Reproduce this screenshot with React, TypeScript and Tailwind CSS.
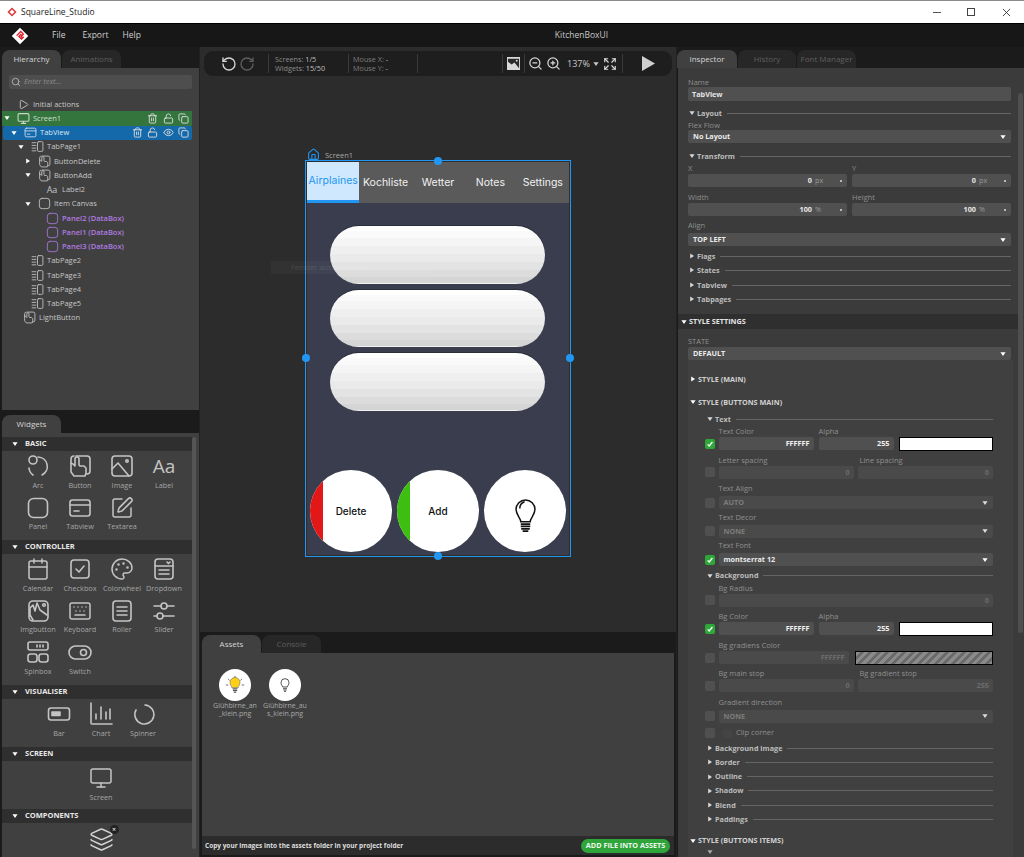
import { Calendar, Copy, Expand, Eye, House, Keyboard, Layers, LockOpen, Monitor, Palette, Play, RotateCcw, RotateCw, Search, SquarePen, Trash2, ZoomIn, ZoomOut } from 'lucide-react';
import type { ReactNode } from 'react';

const ui = { fontFamily: '"Open Sans", "Noto Sans", sans-serif' };

function Tri({ open, className = 'text-white' }: { open?: boolean; className?: string }) {
  return (
    <svg viewBox="0 0 6 6" className={`w-[6px] h-[6px] shrink-0 fill-current ${className}`}>
      {open ? <path d="M0.4 1.2H5.6L3 5Z" /> : <path d="M1.2 0.4V5.6L5 3Z" />}
    </svg>
  );
}

/* ---------- drawn icons ---------- */
function Svg({ size = 14, children, className = 'text-[#c4c4c4]' }: { size?: number; children: ReactNode; className?: string }) {
  return (
    <svg viewBox="0 0 24 24" width={size} height={size} fill="none" stroke="currentColor" strokeWidth={1.6} strokeLinecap="round" strokeLinejoin="round" className={`shrink-0 ${className}`}>
      {children}
    </svg>
  );
}
const ButtonGlyph = () => (
  <>
    <path d="M8 2h11a3 3 0 0 1 3 3v12a3 3 0 0 1-3 3h-1" />
    <path d="M3 9V5a3 3 0 0 1 3-3" />
    <path d="M3 9v9l3 4h11l1-3v-5l-2-2h-4l-1-1V5a2 2 0 0 0-4 0v7l-2-2a1.5 1.5 0 0 0-2 0" />
  </>
);
const TabviewGlyph = () => (
  <>
    <rect x="2" y="4" width="20" height="16" rx="2.5" />
    <path d="M2 9h20M6 15h5" />
  </>
);
const PanelGlyph = () => <rect x="2.5" y="2.5" width="19" height="19" rx="5" />;
const TabPageGlyph = () => (
  <>
    <path d="M2 5h7M2 10h7M2 15h7M2 20h7" />
    <rect x="12" y="3" width="10" height="18" rx="2" />
  </>
);
const ArcGlyph = () => (
  <>
    <circle cx="7" cy="6" r="4" />
    <path d="M12 3a9.5 9.5 0 0 1 4 18M7 21a9.5 9.5 0 0 1-4-7" />
  </>
);
const ImageGlyph = () => (
  <>
    <rect x="2" y="2" width="20" height="20" rx="3" />
    <circle cx="17" cy="7" r="1.2" />
    <path d="M2 15l6-6 11 13" />
  </>
);
const CheckGlyph = () => (
  <>
    <rect x="3" y="3" width="18" height="18" rx="3" />
    <path d="M8 12l3 3 5-6" />
  </>
);
const DropdownGlyph = () => (
  <>
    <rect x="3" y="2" width="18" height="20" rx="3" />
    <path d="M3 9h18M7 13h10M7 17h10M15 5l1.5 1.5L18 5" />
  </>
);
const ImgButtonGlyph = () => (
  <>
    <rect x="3" y="2" width="19" height="20" rx="4" />
    <circle cx="18" cy="6" r="1.3" />
    <path d="M7 21l-3-5V9l3-3 2 6 2-8 3 7 7 5" />
  </>
);
const RollerGlyph = () => (
  <>
    <rect x="3" y="2" width="18" height="20" rx="3" />
    <path d="M7 8h10M7 12h10M7 16h10" />
  </>
);
const SliderGlyph = () => (
  <>
    <path d="M2 7h7M15 7h7M2 17h3M11 17h11" />
    <circle cx="12" cy="7" r="3" />
    <circle cx="8" cy="17" r="3" />
  </>
);
const SpinboxGlyph = () => (
  <>
    <rect x="2" y="2" width="20" height="8" rx="2" />
    <rect x="2" y="14" width="9" height="8" rx="2.5" />
    <rect x="13" y="14" width="9" height="8" rx="2.5" />
    <path d="M11 5v2M14 5v2M17 5v2" />
  </>
);
const SwitchGlyph = () => (
  <>
    <rect x="1" y="6" width="22" height="13" rx="6.5" />
    <circle cx="15.5" cy="12.5" r="3" />
  </>
);
const BarGlyph = () => (
  <>
    <rect x="1.5" y="6" width="21" height="12" rx="2.5" />
    <rect x="5" y="10" width="8" height="3.5" fill="currentColor" />
  </>
);
const ChartGlyph = () => <path d="M2 1v20a1 1 0 0 0 1 1h20M7 12v5M12 5v12M17 10v7M21 7v10" />;
const SpinnerGlyph = () => <path d="M14 3a9.5 9.5 0 1 1-9 5" />;

function Logo({ size }: { size: number }) {
  return (
    <svg viewBox="0 0 24 24" width={size} height={size} className="shrink-0">
      <path d="M12 1L23 12 12 23 1 12Z" fill="#fff" />
      <path d="M7.5 11.5L13 6l3.5 3.5-2 2-1.5-1.5-2.5 2.5 3.5 3.5 3-3M13 12l2 2" fill="none" stroke="#e01b24" strokeWidth={1.8} />
    </svg>
  );
}

function BulbBig() {
  return (
    <svg viewBox="0 0 24 38" className="w-[23px] h-[36px] mt-[10px]" fill="none" stroke="#111" strokeWidth={1.6}>
      <path d="M7 25c0-4-5-7-5-13a10 10 0 0 1 20 0c0 6-5 9-5 13Z" />
      <path d="M6 11c0-4 2-6 5-7" />
      <path d="M7 27.5h10M7 30h10M7.5 32.5h9M9 35h6" strokeWidth={1.8} />
    </svg>
  );
}

/* ---------- shared pieces ---------- */
function TabBar({ tabs, className = '' }: { tabs: { label: string; w: string }[]; className?: string }) {
  return (
    <div className={`flex h-[18px] shrink-0 ${className}`}>
      {tabs.map((t, i) => (
        <div
          key={t.label}
          className={`${t.w} mr-px flex items-center justify-center rounded-t-lg text-[8px] ${i === 0 ? 'bg-[#404040] text-[#d4d4d4]' : 'bg-[#272727] text-[#5f5f5f]'}`}
        >
          {t.label}
        </div>
      ))}
    </div>
  );
}

const INDENT = ['pl-[2px]', 'pl-[8px]', 'pl-[16px]', 'pl-[23px]', 'pl-[31px]'];

function TreeRow({ level, arrow, icon, label, className = '', labelClass = 'text-[#c6c6c6]', actions }: {
  level: number; arrow?: 'open' | 'closed'; icon: ReactNode; label: string; className?: string; labelClass?: string; actions?: ReactNode;
}) {
  return (
    <div className={`flex items-center h-[14.25px] ${INDENT[level]} ${className}`}>
      <span className="w-[6px] mr-[6px] shrink-0 flex">{arrow && <Tri open={arrow === 'open'} />}</span>
      <span className="w-[14px] flex justify-center shrink-0">{icon}</span>
      <span className={`ml-[3px] text-[7.5px] whitespace-nowrap ${labelClass}`}>{label}</span>
      {actions && <span className="ml-auto flex items-center gap-[4.5px] pr-[3px] text-[#dcdcdc]">{actions}</span>}
    </div>
  );
}

function Hierarchy() {
  const purple = 'font-semibold text-[#b07be0]';
  return (
    <div className="h-[342px] bg-[#404040] pt-[7px] shrink-0">
      <div className="ml-[7px] w-[183px] h-[14px] rounded-[2px] bg-[#4e4e4e] flex items-center px-[2px] gap-[3px]">
        <Search size={10} className="text-[#bbb]" />
        <span className="text-[7.5px] italic text-[#8d8d8d]">Enter text...</span>
      </div>
      <div className="mt-[8px] w-[190px]">
        <TreeRow level={0} icon={<Play size={11} className="text-[#c4c4c4]" />} label="Initial actions" />
        <TreeRow
          level={0} arrow="open" icon={<Monitor size={13} className="text-[#c8d8c8]" />} label="Screen1" className="bg-[#33753c]" labelClass="text-[#d4dfd4]"
          actions={<>
            <Trash2 size={11} /><LockOpen size={11} /><Copy size={11} />
          </>}
        />
        <TreeRow
          level={1} arrow="open" icon={<Svg size={13} className="text-[#cfe0ef]"><TabviewGlyph /></Svg>} label="TabView" className="bg-[#1469ab] rounded-[2px] ml-px" labelClass="text-[#d8e6f2]"
          actions={<>
            <Trash2 size={11} /><LockOpen size={11} /><Eye size={11} /><Copy size={11} />
          </>}
        />
        <TreeRow level={2} arrow="open" icon={<Svg size={13}><TabPageGlyph /></Svg>} label="TabPage1" />
        <TreeRow level={3} arrow="closed" icon={<Svg size={13}><ButtonGlyph /></Svg>} label="ButtonDelete" />
        <TreeRow level={3} arrow="open" icon={<Svg size={13}><ButtonGlyph /></Svg>} label="ButtonAdd" />
        <TreeRow level={4} icon={<span className="text-[9px] text-[#c4c4c4] leading-none">Aa</span>} label="Label2" />
        <TreeRow level={3} arrow="open" icon={<Svg size={13}><PanelGlyph /></Svg>} label="Item Canvas" />
        <TreeRow level={4} icon={<Svg size={13} className="text-[#a878d8]"><PanelGlyph /></Svg>} label="Panel2 (DataBox)" labelClass={purple} />
        <TreeRow level={4} icon={<Svg size={13} className="text-[#a878d8]"><PanelGlyph /></Svg>} label="Panel1 (DataBox)" labelClass={purple} />
        <TreeRow level={4} icon={<Svg size={13} className="text-[#a878d8]"><PanelGlyph /></Svg>} label="Panel3 (DataBox)" labelClass={purple} />
        <TreeRow level={2} icon={<Svg size={13}><TabPageGlyph /></Svg>} label="TabPage2" />
        <TreeRow level={2} icon={<Svg size={13}><TabPageGlyph /></Svg>} label="TabPage3" />
        <TreeRow level={2} icon={<Svg size={13}><TabPageGlyph /></Svg>} label="TabPage4" />
        <TreeRow level={2} icon={<Svg size={13}><TabPageGlyph /></Svg>} label="TabPage5" />
        <TreeRow level={1} icon={<Svg size={13}><ButtonGlyph /></Svg>} label="LightButton" />
      </div>
    </div>
  );
}

function WidgetHead({ label }: { label: string }) {
  return (
    <div className="h-[14px] w-[191px] bg-[#2f2f2f] flex items-center pl-[10px] gap-[7px]">
      <Tri open />
      <span className="text-[7.5px] font-bold text-[#e8e8e8]">{label}</span>
    </div>
  );
}

function Widget({ label, children }: { label: string; children: ReactNode }) {
  return (
    <div className="w-[42px] h-[41.5px] flex flex-col items-center pt-[2.5px]">
      <div className="h-[25px] flex items-center justify-center">{children}</div>
      <span className="mt-px text-[7.25px] leading-[11px] text-[#a6a6a6] whitespace-nowrap">{label}</span>
    </div>
  );
}

function Widgets() {
  const S = 24;
  return (
    <div className="relative flex-1 bg-[#404040] pt-[4px] ml-[2px] overflow-hidden">
      <div className="absolute right-[3px] top-[4px] bottom-[8px] w-[4px] rounded bg-[#555]" />
      <WidgetHead label="BASIC" />
      <div className="grid grid-cols-[repeat(4,42px)] pl-[15px] pb-[6px]">
        <Widget label="Arc"><Svg size={S}><ArcGlyph /></Svg></Widget>
        <Widget label="Button"><Svg size={S}><ButtonGlyph /></Svg></Widget>
        <Widget label="Image"><Svg size={S}><ImageGlyph /></Svg></Widget>
        <Widget label="Label"><span className="text-[19px] leading-none text-[#c4c4c4]">Aa</span></Widget>
        <Widget label="Panel"><Svg size={S}><PanelGlyph /></Svg></Widget>
        <Widget label="Tabview"><Svg size={S}><TabviewGlyph /></Svg></Widget>
        <Widget label="Textarea"><SquarePen size={S} strokeWidth={1.5} className="text-[#c4c4c4]" /></Widget>
      </div>
      <WidgetHead label="CONTROLLER" />
      <div className="grid grid-cols-[repeat(4,42px)] pl-[15px] pb-[6.5px]">
        <Widget label="Calendar"><Calendar size={S} strokeWidth={1.5} className="text-[#c4c4c4]" /></Widget>
        <Widget label="Checkbox"><Svg size={S}><CheckGlyph /></Svg></Widget>
        <Widget label="Colorwheel"><Palette size={S} strokeWidth={1.5} className="text-[#c4c4c4]" /></Widget>
        <Widget label="Dropdown"><Svg size={S}><DropdownGlyph /></Svg></Widget>
        <Widget label="Imgbutton"><Svg size={S}><ImgButtonGlyph /></Svg></Widget>
        <Widget label="Keyboard"><Keyboard size={S} strokeWidth={1.5} className="text-[#c4c4c4]" /></Widget>
        <Widget label="Roller"><Svg size={S}><RollerGlyph /></Svg></Widget>
        <Widget label="Slider"><Svg size={S}><SliderGlyph /></Svg></Widget>
        <Widget label="Spinbox"><Svg size={S}><SpinboxGlyph /></Svg></Widget>
        <Widget label="Switch"><Svg size={S}><SwitchGlyph /></Svg></Widget>
      </div>
      <WidgetHead label="VISUALISER" />
      <div className="flex justify-center pl-[7px] w-[191px] pb-[6.5px]">
        <Widget label="Bar"><Svg size={S}><BarGlyph /></Svg></Widget>
        <Widget label="Chart"><Svg size={S}><ChartGlyph /></Svg></Widget>
        <Widget label="Spinner"><Svg size={S}><SpinnerGlyph /></Svg></Widget>
      </div>
      <WidgetHead label="SCREEN" />
      <div className="flex justify-center pl-[7px] w-[191px] pb-[4.5px] pt-[2px]">
        <Widget label="Screen"><Monitor size={S} strokeWidth={1.5} className="text-[#c4c4c4]" /></Widget>
      </div>
      <WidgetHead label="COMPONENTS" />
      <div className="flex justify-center pl-[7px] w-[191px] pt-[4px]">
        <div className="relative">
          <Layers size={25} strokeWidth={1.4} className="text-[#d4d4d4]" />
          <span className="absolute -top-[2px] -right-[5px] w-[9px] h-[9px] rounded-full bg-[#222] text-white text-[7px] leading-[9px] text-center">×</span>
        </div>
      </div>
    </div>
  );
}

/* ---------- canvas ---------- */
function Sep() {
  return <span className="block w-px h-[19px] bg-[#3a3a3a] shrink-0" />;
}

function Toolbar() {
  return (
    <div className="mx-[4px] mt-[4px] h-[25px] rounded-[9px] bg-[#1e1e1e] flex items-center shrink-0">
      <RotateCcw size={16} className="ml-[17px] text-[#d6d6d6]" />
      <RotateCw size={16} className="ml-[2px] mr-[13px] text-[#5e5e5e]" />
      <Sep />
      <div className="w-[79px] pl-[6px] text-[7.25px] leading-[9px] text-[#8c8c8c]">
        <div>Screens: <span className="text-[#bdbdbd]">1/5</span></div>
        <div>Widgets: <span className="text-[#bdbdbd]">15/50</span></div>
      </div>
      <Sep />
      <div className="w-[68px] pl-[4px] text-[7.25px] leading-[9px] text-[#7d7d7d]">
        <div>Mouse X: <span className="text-[#bdbdbd]">-</span></div>
        <div>Mouse Y: <span className="text-[#bdbdbd]">-</span></div>
      </div>
      <Sep />
      <div className="w-[84px]" />
      <Sep />
      <svg viewBox="0 0 14 14" className="w-[13px] h-[13px] mx-[4px] shrink-0">
        <path d="M0 0H14V14H0Z" fill="#d8d8d8" />
        <path d="M1 2H13V12L8 6 5 8 1 5Z" fill="#2a2a2a" />
        <circle cx="10.5" cy="4" r="1" fill="#d8d8d8" />
      </svg>
      <Sep />
      <ZoomOut size={15} className="ml-[3px] text-[#d6d6d6]" />
      <ZoomIn size={15} className="ml-[3px] text-[#d6d6d6]" />
      <span className="ml-[6px] w-[22px] text-[9px] text-[#c8c8c8] whitespace-nowrap">137%</span>
      <Tri open className="text-[#c8c8c8] ml-[4px]" />
      <Expand size={14} className="ml-[4px] text-[#d6d6d6]" />
      <span className="ml-[5px]"><Sep /></span>
      <svg viewBox="0 0 14 16" className="w-[13px] h-[15px] ml-[19px] fill-[#cfcfcf]"><path d="M0 0L14 8 0 16Z" /></svg>
    </div>
  );
}

function Handle({ className }: { className: string }) {
  return <span className={`absolute w-[8px] h-[8px] rounded-full bg-[#2196f3] ${className}`} />;
}

const PHONE_TABS = ['Airplaines', 'Kochliste', 'Wetter', 'Notes', 'Settings'];

function RoundButton({ label, bar }: { label: ReactNode; bar?: string }) {
  return (
    <div className="relative w-[82px] h-[82px] rounded-full bg-white overflow-hidden flex items-center justify-center shrink-0">
      {bar && <span className={`absolute left-0 inset-y-0 w-[12.5px] ${bar}`} />}
      {label}
    </div>
  );
}

function Pill() {
  return (
    <div className="w-[215px] h-[57.5px] rounded-full shadow-[0_-1px_0_#2a2d3a] bg-[linear-gradient(to_bottom,#ffffff_0,#ffffff_8%,#fbfafa_8%,#fbfafa_20%,#f6f5f5_20%,#f6f5f5_34%,#f0efef_34%,#f0efef_48%,#eaeaea_48%,#eaeaea_62%,#e4e3e4_62%,#e4e3e4_76%,#dcdcdd_76%,#dcdcdd_88%,#d5d5d6_88%,#d5d5d6_98%,#f0f0f0_98%)]" />
  );
}

function Phone() {
  return (
    <div className="relative ml-[105px] w-[266px] h-[397px] border-[1.5px] border-[#2196f3] bg-[#2e2e2e] p-[1px]" style={{ fontFamily: 'Inter, "Noto Sans", sans-serif' }}>
      <Handle className="-top-[4px] left-[128px]" />
      <Handle className="-bottom-[4px] left-[128px]" />
      <Handle className="top-[193px] -left-[4px]" />
      <Handle className="top-[193px] -right-[4px]" />
      <div className="absolute -top-[14px] left-[1px] flex items-center gap-[5px]" style={ui}>
        <House size={13} className="text-[#2196f3]" />
        <span className="mt-[3px] text-[7.5px] text-[#a8a8a8]">Screen1</span>
      </div>
      <div className="h-full bg-[#3a3d4d] flex flex-col">
        <div className="h-[41px] bg-[#5a5a5a] grid grid-cols-5 shrink-0">
          {PHONE_TABS.map((t, i) => (
            <div key={t} className={`flex items-center justify-center text-[10.5px] whitespace-nowrap ${i === 0 ? 'bg-[#cfe8fd] text-[#2196f3] border-b-[3px] border-[#2196f3]' : 'text-[#f0f0f0]'}`}>
              {t}
            </div>
          ))}
        </div>
        <div className="flex flex-col items-center gap-[6px] pt-[23px] pr-[1px]">
          <Pill /><Pill /><Pill />
        </div>
        <div className="mt-auto mb-[3px] flex justify-between px-[3px]">
          <RoundButton bar="bg-[#e21818]" label={<span className="text-[10px] text-[#111] font-medium">Delete</span>} />
          <RoundButton bar="bg-[#3cbf10]" label={<span className="text-[10px] text-[#111] font-medium">Add</span>} />
          <RoundButton label={<BulbBig />} />
        </div>
      </div>
      <div className="absolute top-[100px] -left-[35px] w-[160px] h-[13px] bg-white/[0.03] text-[7.5px] leading-[13px] pl-[20px] text-white/10" style={ui}>
        Fenster ausschneiden
      </div>
    </div>
  );
}

function AssetThumb({ name1, name2, on }: { name1: string; name2: string; on?: boolean }) {
  return (
    <div className="w-[50px] flex flex-col items-center">
      <div className="w-[32px] h-[32px] rounded-full bg-white flex items-center justify-center">
        {on ? (
          <svg viewBox="0 0 24 24" className="w-[20px] h-[20px]" stroke="#555" strokeWidth={1}>
            <path d="M12 1v2.5M3.5 4.5l2 2M20.5 4.5l-2 2M1 12h3M20 12h3" />
            <path d="M8 15c0-2-2-3-2-6a6 6 0 0 1 12 0c0 3-2 4-2 6Z" fill="#fdd017" strokeWidth={0.6} />
            <path d="M9 16.5h6M9.5 18.5h5M10.5 20.5h3" strokeWidth={1.4} />
          </svg>
        ) : (
          <svg viewBox="0 0 24 24" className="w-[16px] h-[16px]" fill="none" stroke="#555" strokeWidth={1.5}>
            <path d="M8.5 15c0-2-2.5-3-2.5-6.5a6 6 0 0 1 12 0c0 3.500-2.500 4.500-2.500 6.500Z" />
            <path d="M9 17.500h6M9.500 19.500h5M10.500 21.500h3" />
          </svg>
        )}
      </div>
      <div className="mt-[1px] text-[7px] leading-[8px] text-[#a8a8a8] text-center whitespace-nowrap">
        <div>{name1}</div>
        <div>{name2}</div>
      </div>
    </div>
  );
}

function Assets() {
  return (
    <div className="flex-1 flex flex-col bg-[#1b1b1b] pt-[3px] pb-[2px] px-[2px]">
      <TabBar tabs={[{ label: 'Assets', w: 'w-[59px]' }, { label: 'Console', w: 'w-[59px]' }]} />
      <div className="flex-1 bg-[#404040] flex pl-[8px] pt-[16px]">
        <AssetThumb name1="Glühbirne_an" name2="_klein.png" on />
        <AssetThumb name1="Glühbirne_au" name2="s_klein.png" />
      </div>
      <div className="h-[19px] bg-[#2c2c2c] flex items-center justify-between pl-[3px] pr-[4px] shrink-0">
        <span className="text-[6.5px] font-bold text-[#dedede]">Copy your images into the assets folder in your project folder</span>
        <span className="h-[14px] w-[89px] rounded-full bg-[#2ea43a] text-[7.25px] font-bold text-[#eef8ee] flex items-center justify-center whitespace-nowrap">ADD FILE INTO ASSETS</span>
      </div>
    </div>
  );
}

/* ---------- inspector ---------- */
function Label({ children, className = '' }: { children: ReactNode; className?: string }) {
  return <div className={`h-[10px] leading-[10px] text-[7.5px] text-[#8f8f8f] whitespace-nowrap ${className}`}>{children}</div>;
}

function Select({ value, disabled, className = '' }: { value: string; disabled?: boolean; className?: string }) {
  return (
    <div className={`h-[13px] rounded-[2px] flex items-center justify-between pl-[5px] pr-[5px] text-[7.25px] font-bold ${disabled ? 'bg-[#4a4a4a] text-[#7c7c7c]' : 'bg-[#505050] text-[#eaeaea]'} ${className}`}>
      <span>{value}</span>
      <Tri open className={disabled ? 'text-[#dddddd]' : 'text-white'} />
    </div>
  );
}

function NumInput({ value, unit }: { value: string; unit: string }) {
  return (
    <div className="h-[13px] rounded-[2px] bg-[#505050] flex items-center justify-end pr-[5px] text-[7.25px]">
      <span className="font-bold text-[#e8e8e8]">{value}</span>
      <span className="ml-[3px] w-[13px] text-[#999]">{unit}</span>
      <span className="ml-[12px] w-[2px] h-[2px] bg-[#ddd] rounded-full" />
    </div>
  );
}

function Input({ value, disabled, className = '' }: { value?: string; disabled?: boolean; className?: string }) {
  return (
    <div className={`h-[13px] rounded-[2px] flex items-center justify-end pr-[4px] text-[7.25px] font-bold ${disabled ? 'bg-[#4a4a4a] text-[#6c6c6c]' : 'bg-[#505050] text-[#f0f0f0]'} ${className}`}>
      {value}
    </div>
  );
}

function Sec({ label, open, className = 'h-[14px] pl-px' }: { label: string; open?: boolean; className?: string }) {
  return (
    <div className={`flex items-center ${className}`}>
      <Tri open={open} className="text-[#d8d8d8]" />
      <span className="ml-[2px] text-[7.25px] font-bold text-[#bdbdbd] whitespace-nowrap">{label}</span>
      <span className="ml-[5px] flex-1 h-px bg-[#656565]" />
    </div>
  );
}

function Check({ on }: { on?: boolean }) {
  return (
    <span className={`w-[10px] h-[10px] rounded-[2px] shrink-0 flex items-center justify-center ${on ? 'bg-[#2fa83a]' : 'bg-[#505050]'}`}>
      {on && (
        <svg viewBox="0 0 10 10" className="w-[8px] h-[8px]" fill="none" stroke="#fff" strokeWidth={1.6}>
          <path d="M2 5.500l2 2 4-5" />
        </svg>
      )}
    </span>
  );
}

function StyleRow({ label, on, select, children }: { label?: ReactNode; on?: boolean; select?: boolean; children: ReactNode }) {
  return (
    <div className="h-[28.5px]">
      <div className="pl-[13.5px]">{label}</div>
      <div className={`flex items-center gap-[3.5px] ${select ? 'mt-[3px]' : 'mt-px'}`}>
        <Check on={on} />
        <div className="flex-1 min-w-0">{children}</div>
      </div>
    </div>
  );
}

function Swatch({ className = '' }: { className?: string }) {
  return <div className={`h-[14px] border border-black bg-white ${className}`} />;
}

function Inspector() {
  return (
    <div className="relative h-[789px] bg-[#3b3b3b] overflow-hidden ml-px">
      <div className="absolute right-[1px] top-[25px] h-[540px] w-[5px] rounded bg-[#4f4f4f]" />
      <div className="pl-[10px] pr-[13px] pt-[9px]">
        <Label>Name</Label>
        <div className="h-[14px] rounded-[2px] bg-[#505050] flex items-center pl-[4px] text-[7.25px] font-bold text-[#e4e4e4]">TabView</div>
        <Sec label="Layout" open className="h-[14px] pl-px mt-[5px]" />
        <Label>Flex Flow</Label>
        <Select value="No Layout" />
        <Sec label="Transform" open className="h-[14px] pl-px mt-[6px]" />
        <div className="grid grid-cols-2 gap-x-[5px]">
          <Label>X</Label>
          <Label>Y</Label>
        </div>
        <div className="grid grid-cols-2 gap-x-[5px] mt-px">
          <NumInput value="0" unit="px" />
          <NumInput value="0" unit="px" />
        </div>
        <div className="grid grid-cols-2 gap-x-[5px] mt-[5px]">
          <Label>Width</Label>
          <Label>Height</Label>
        </div>
        <div className="grid grid-cols-2 gap-x-[5px] mt-px">
          <NumInput value="100" unit="%" />
          <NumInput value="100" unit="%" />
        </div>
        <Label className="mt-[4px]">Align</Label>
        <Select value="TOP LEFT" className="mt-[3px]" />
        <Sec label="Flags" className="h-[14px] pl-px mt-[3px]" />
        <Sec label="States" />
        <Sec label="Tabview" className="h-[14px] pl-px mt-px" />
        <Sec label="Tabpages" />
      </div>
      <div className="mt-[8px] h-[15px] w-[340px] bg-[#2f2f2f] flex items-center pl-[3px] gap-[2px]">
        <Tri open />
        <span className="text-[7.25px] font-bold text-[#e4e4e4]">STYLE SETTINGS</span>
      </div>
      <div className="pl-[10px] pr-[13px]">
        <Label className="mt-[7px]">STATE</Label>
        <Select value="DEFAULT" className="mt-px" />
      </div>
      <div className="ml-[10px] mr-[11px] bg-[#404040] pr-[20px] pl-[2px] pt-[12px] h-[500px]">
        <div className="flex items-center h-[14px] gap-[2px]">
          <Tri /><span className="text-[7.25px] font-bold text-[#d0d0d0]">STYLE (MAIN)</span>
        </div>
        <div className="flex items-center h-[14px] gap-[2px] mt-[9px]">
          <Tri open /><span className="text-[7.25px] font-bold text-[#d0d0d0]">STYLE (BUTTONS MAIN)</span>
        </div>
        <div className="pl-[15px]">
          <Sec label="Text" open className="h-[14px] pl-[2px] mt-[3px]" />
          <StyleRow
            on
            label={<div className="flex"><Label className="w-[100px]">Text Color</Label><Label>Alpha</Label></div>}
          >
            <div className="flex gap-[5px]">
              <Input value="FFFFFF" className="w-[95px]" />
              <Input value="255" className="w-[75px]" />
              <Swatch className="flex-1" />
            </div>
          </StyleRow>
          <StyleRow label={<div className="flex"><Label className="w-[141px]">Letter spacing</Label><Label>Line spacing</Label></div>}>
            <div className="grid grid-cols-2 gap-[4px]">
              <Input value="0" disabled />
              <Input value="0" disabled />
            </div>
          </StyleRow>
          <StyleRow select label={<Label>Text Align</Label>}><Select value="AUTO" disabled /></StyleRow>
          <StyleRow select label={<Label>Text Decor</Label>}><Select value="NONE" disabled /></StyleRow>
          <StyleRow select on label={<Label>Text Font</Label>}><Select value="montserrat 12" /></StyleRow>
          <Sec label="Background" open className="h-[14px] pl-[2px]" />
          <StyleRow label={<Label>Bg Radius</Label>}><Input value="0" disabled /></StyleRow>
          <StyleRow on label={<div className="flex"><Label className="w-[100px]">Bg Color</Label><Label>Alpha</Label></div>}>
            <div className="flex gap-[5px]">
              <Input value="FFFFFF" className="w-[95px]" />
              <Input value="255" className="w-[75px]" />
              <Swatch className="flex-1" />
            </div>
          </StyleRow>
          <StyleRow label={<Label>Bg gradiens Color</Label>}>
            <div className="flex gap-[6px]">
              <Input value="FFFFFF" disabled className="w-[130px]" />
              <div className="flex-1 h-[14px] border border-black bg-[repeating-linear-gradient(135deg,#8a8a8a_0,#8a8a8a_3px,#6a6a6a_3px,#6a6a6a_6px)]" />
            </div>
          </StyleRow>
          <StyleRow label={<div className="flex"><Label className="w-[141px]">Bg main stop</Label><Label>Bg gradient stop</Label></div>}>
            <div className="grid grid-cols-2 gap-[4px]">
              <Input value="0" disabled />
              <Input value="255" disabled />
            </div>
          </StyleRow>
          <StyleRow select label={<Label>Gradient direction</Label>}><Select value="NONE" disabled /></StyleRow>
          <div className="flex items-center h-[14px] mt-px">
            <Check />
            <span className="ml-[8px] w-[9px] h-[9px] rounded-[2px] bg-[#444]" />
            <span className="ml-[4px] text-[7.5px] text-[#8f8f8f]">Clip corner</span>
          </div>
          <div className="mt-px">
            {['Background image', 'Border', 'Outline', 'Shadow', 'Blend', 'Paddings'].map(s => (
              <Sec key={s} label={s} className="h-[14.25px] pl-[2px]" />
            ))}
          </div>
        </div>
        <div className="flex items-center h-[14px] gap-[2px] mt-[7px]">
          <Tri open /><span className="text-[7.25px] font-bold text-[#d0d0d0]">STYLE (BUTTONS ITEMS)</span>
        </div>
        <div className="pl-[17px] mt-[1px]"><Tri open className="text-[#aaa]" /></div>
      </div>
    </div>
  );
}

export default function App() {
  return (
    <div className="w-[1024px] h-[857px] overflow-hidden flex flex-col bg-[#1b1b1b]" style={ui}>
      {/* window title */}
      <div className="h-[23px] bg-white border-t border-[#8a8a8a] flex items-center pl-[7px] shrink-0">
        <svg viewBox="0 0 24 24" className="w-[10px] h-[10px]">
          <path d="M12 1L23 12 12 23 1 12Z" fill="#e0343a" />
          <path d="M12 6l6 6-6 6-6-6Z" fill="#fff" />
        </svg>
        <span className="ml-[4px] text-[8.5px] text-[#222]">SquareLine_Studio</span>
        <div className="ml-auto flex items-center text-[#333]">
          <span className="w-[8px] h-px bg-[#555] mr-[26px]" />
          <span className="w-[8px] h-[8px] border border-[#444] mr-[27px]" />
          <svg viewBox="0 0 10 10" className="w-[9px] h-[9px] mr-[13px]" stroke="#222" strokeWidth={0.9}><path d="M1 1l8 8M9 1l-8 8" /></svg>
        </div>
      </div>
      {/* menu */}
      <div className="h-[24px] bg-[#171717] border-t border-black flex items-center shrink-0 text-[8.5px] text-[#d0d0d0]">
        <span className="ml-[11px]"><Logo size={18} /></span>
        <span className="ml-[23px]">File</span>
        <span className="ml-[17px]">Export</span>
        <span className="ml-[14px]">Help</span>
        <span className="ml-[414px] text-[#c8c8c8]">KitchenBoxUI</span>
      </div>

      <div className="flex-1 flex min-h-0 bg-[#222]">
        {/* left column */}
        <div className="w-[200px] flex flex-col shrink-0 bg-[#1b1b1b] border-r border-[#222]">
          <TabBar className="mt-[3px] pl-[2px]" tabs={[{ label: 'Hierarchy', w: 'w-[59px]' }, { label: 'Animations', w: 'w-[59px]' }]} />
          <div className="ml-[2px]"><Hierarchy /></div>
          <TabBar className="mt-[5px] pl-[2px]" tabs={[{ label: 'Widgets', w: 'w-[59px]' }]} />
          <Widgets />
        </div>

        {/* center column */}
        <div className="w-[476px] flex flex-col shrink-0">
          <div className="h-[585px] bg-[#2c2c2c] flex flex-col shrink-0">
            <Toolbar />
            <div className="mt-[84px]"><Phone /></div>
          </div>
          <Assets />
        </div>

        {/* right column */}
        <div className="flex-1 flex flex-col bg-[#1b1b1b] border-l border-[#222] min-w-0">
          <TabBar
            className="mt-[3px]"
            tabs={[
              { label: 'Inspector', w: 'w-[60px]' },
              { label: 'History', w: 'w-[58px]' },
              { label: 'Font Manager', w: 'w-[59px]' },
            ]}
          />
          <Inspector />
        </div>
      </div>
    </div>
  );
}
